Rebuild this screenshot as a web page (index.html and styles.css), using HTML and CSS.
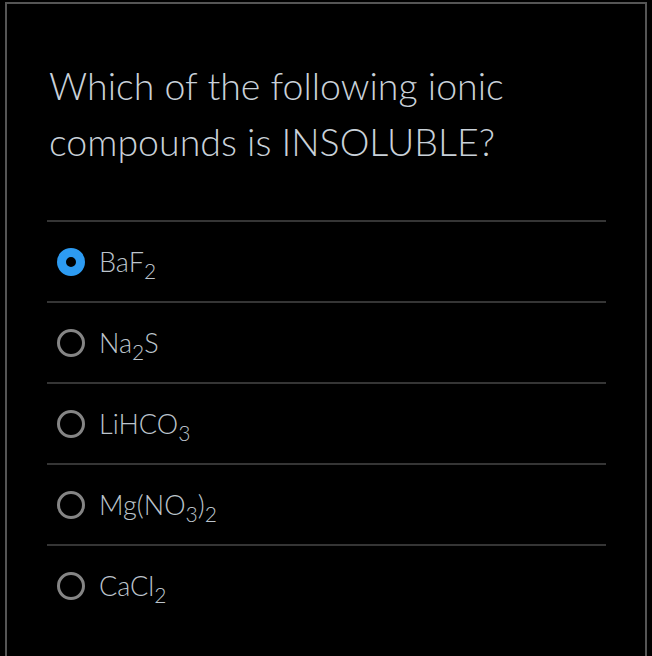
FILE: index.html
```html
<!DOCTYPE html>
<html>
<head>
<meta charset="utf-8">
<link rel="stylesheet" href="styles.css">
</head>
<body>
<div class="card">
  <div class="question">Which of the following ionic compounds is INSOLUBLE?</div>
  <div class="options">
    <div class="option"><span class="radio selected"></span><span class="label">BaF<sub>2</sub></span></div>
    <div class="option"><span class="radio"></span><span class="label">Na<sub>2</sub>S</span></div>
    <div class="option"><span class="radio"></span><span class="label">LiHCO<sub>3</sub></span></div>
    <div class="option"><span class="radio"></span><span class="label">Mg(NO<sub>3</sub>)<sub>2</sub></span></div>
    <div class="option"><span class="radio"></span><span class="label">CaCl<sub>2</sub></span></div>
  </div>
</div>
</body>
</html>
```
FILE: styles.css
```css
html, body {
  margin: 0;
  padding: 0;
  background: #000;
  height: 100%;
  overflow: hidden;
}
body {
  font-family: "Lato Light", Lato, "Open Sans", sans-serif;
}
.card {
  margin: 2px 5px 0 5px;
  border: 2px solid #555555;
  border-bottom: none;
  height: calc(100vh - 2px);
  padding: 54px 39px 0 40px;
  box-sizing: border-box;
}
.question {
  font-size: 37.5px;
  line-height: 56px;
  font-weight: 300;
  color: #c9d1d9;
  padding-left: 2px;
  padding-right: 80px;
  margin-bottom: 50px;
}
.option {
  display: flex;
  align-items: center;
  height: 81px;
  box-sizing: border-box;
  border-top: 2px solid #353535;
}
.radio {
  width: 28px;
  height: 28px;
  box-sizing: border-box;
  border-radius: 50%;
  border: 3px solid #858585;
  margin-left: 10px;
  margin-right: 14px;
  flex: none;
}
.radio.selected {
  border: 9px solid #2d9bf2;
}
.label {
  font-size: 27px;
  font-weight: 300;
  color: #bcc4cc;
  line-height: 1;
}
.label sub {
  font-size: 0.78em;
  vertical-align: -0.32em;
  line-height: 0;
}
```
